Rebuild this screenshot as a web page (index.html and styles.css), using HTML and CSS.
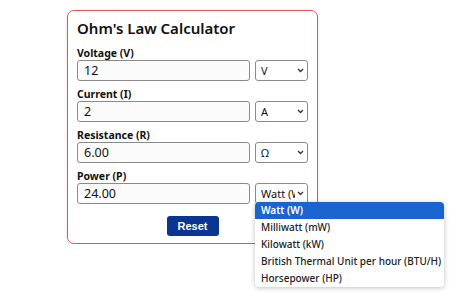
FILE: index.html
```html
<!DOCTYPE html>
<html>
<head>
<meta charset="utf-8">
<link rel="stylesheet" href="styles.css">
</head>
<body>
<div class="card">
  <h1 class="title">Ohm's Law Calculator</h1>
  <div class="group">
    <div class="label">Voltage (V)</div>
    <div class="row">
      <div class="input">12</div>
      <div class="select"><span class="sel-text">V</span><svg class="chev" width="7" height="5" viewBox="0 0 7 5"><path d="M1 1 L3.5 3.5 L6 1" fill="none" stroke="#333" stroke-width="1.3"/></svg></div>
    </div>
  </div>
  <div class="group">
    <div class="label">Current (I)</div>
    <div class="row">
      <div class="input">2</div>
      <div class="select"><span class="sel-text">A</span><svg class="chev" width="7" height="5" viewBox="0 0 7 5"><path d="M1 1 L3.5 3.5 L6 1" fill="none" stroke="#333" stroke-width="1.3"/></svg></div>
    </div>
  </div>
  <div class="group">
    <div class="label">Resistance (R)</div>
    <div class="row">
      <div class="input">6.00</div>
      <div class="select"><span class="sel-text">Ω</span><svg class="chev" width="7" height="5" viewBox="0 0 7 5"><path d="M1 1 L3.5 3.5 L6 1" fill="none" stroke="#333" stroke-width="1.3"/></svg></div>
    </div>
  </div>
  <div class="group">
    <div class="label">Power (P)</div>
    <div class="row">
      <div class="input">24.00</div>
      <div class="select"><span class="sel-text">Watt (W)</span><svg class="chev" width="7" height="5" viewBox="0 0 7 5"><path d="M1 1 L3.5 3.5 L6 1" fill="none" stroke="#333" stroke-width="1.3"/></svg></div>
    </div>
  </div>
  <div class="actions">
    <button class="reset">Reset</button>
  </div>
</div>
<div class="dropdown">
  <div class="opt active">Watt (W)</div>
  <div class="opt">Milliwatt (mW)</div>
  <div class="opt">Kilowatt (kW)</div>
  <div class="opt">British Thermal Unit per hour (BTU/H)</div>
  <div class="opt">Horsepower (HP)</div>
</div>
</body>
</html>
```
FILE: styles.css
```css
html, body {
  margin: 0;
  padding: 0;
  background: #fff;
}
body {
  padding: 10px 0 0 67px;
  font-family: "Noto Sans", "Open Sans", sans-serif;
  color: #111;
}
.card {
  box-sizing: border-box;
  width: 251px;
  height: 234px;
  border: 1.5px solid #d9595c;
  border-radius: 7px;
  padding: 6px 9px 8px 9px;
  box-shadow: 0 0 3px rgba(217, 89, 92, 0.25);
}
.title {
  margin: 0 0 8px 0;
  font-size: 15px;
  line-height: 22px;
  font-weight: 600;
  color: #111;
}
.group {
  margin-bottom: 7px;
}
.label {
  font-size: 10.5px;
  line-height: 13px;
  font-weight: 700;
  color: #111;
}
.row {
  display: flex;
  gap: 5px;
}
.input {
  box-sizing: border-box;
  width: 173px;
  height: 21px;
  border: 1px solid #8a8a8a;
  border-radius: 3px;
  background: #fbfbfb;
  padding: 0 6px;
  font-size: 12.5px;
  line-height: 19px;
  color: #111;
}
.select {
  box-sizing: border-box;
  width: 53px;
  height: 21px;
  border: 1px solid #8a8a8a;
  border-radius: 3px;
  background: #fff;
  display: flex;
  align-items: center;
  padding: 0 3px 0 5px;
  gap: 2px;
  font-size: 11px;
  color: #111;
  overflow: hidden;
}
.sel-text {
  flex: 1;
  white-space: nowrap;
  overflow: hidden;
}
.chev {
  flex: none;
}
.actions {
  display: flex;
  justify-content: center;
  margin-top: 12px;
}
.reset {
  width: 52px;
  height: 20px;
  border: none;
  border-radius: 3px;
  background: #0a3590;
  color: #fff;
  font-family: "Liberation Sans", Arial, sans-serif;
  font-weight: 700;
  font-size: 11px;
  padding: 0;
}
.dropdown {
  position: absolute;
  left: 255px;
  top: 202px;
  width: 189px;
  background: #fff;
  border-radius: 4px;
  box-shadow: 0 1px 5px rgba(0, 0, 0, 0.25);
  overflow: hidden;
}
.opt {
  height: 17px;
  line-height: 17px;
  padding-left: 6px;
  font-size: 10px;
  font-weight: 500;
  color: #222;
  white-space: nowrap;
}
.opt.active {
  background: #1a64d0;
  color: #fff;
  font-weight: 600;
}
```
